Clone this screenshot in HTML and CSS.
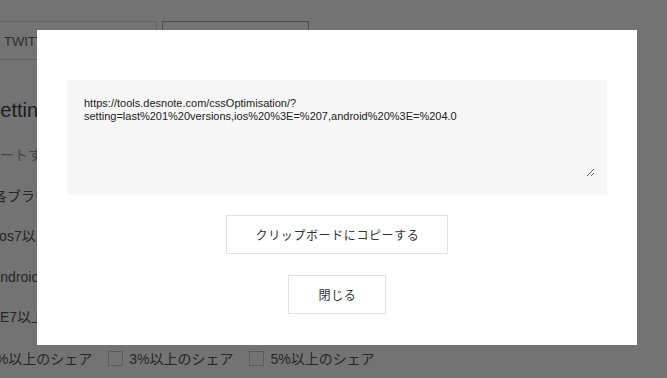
FILE: index.html
```html
<!DOCTYPE html>
<html lang="ja">
<head>
<meta charset="utf-8">
<title>CSS Optimisation</title>
<link rel="stylesheet" href="styles.css">
</head>
<body>
<div class="page">
  <div class="share-row">
    <div class="share-btn share-btn-twitter">TWITTERでシェア</div>
    <div class="share-btn share-btn-url">URLを発行する</div>
  </div>
  <h2 class="setting-title">Settings</h2>
  <p class="setting-desc">サポートするブラウザを選択してください</p>
  <p class="setting-sub">各ブラウザのバージョン</p>
  <label class="check-row"><span class="box"></span><span>ios7以上</span></label>
  <label class="check-row check-row-wide"><span class="box"></span><span>Android4.0以上</span></label>
  <label class="check-row"><span class="box"></span><span>IE7以上</span></label>
  <div class="share-checks">
    <label class="check-item"><span class="box"></span><span>1%以上のシェア</span></label>
    <label class="check-item"><span class="box"></span><span>3%以上のシェア</span></label>
    <label class="check-item"><span class="box"></span><span>5%以上のシェア</span></label>
  </div>
</div>

<div class="overlay">
  <div class="modal">
    <div class="url-box">
      <textarea class="url-text" spellcheck="false">https://tools.desnote.com/cssOptimisation/?setting=last%201%20versions,ios%20%3E=%207,android%20%3E=%204.0</textarea>
    </div>
    <button class="modal-btn modal-btn-copy">クリップボードにコピーする</button>
    <button class="modal-btn modal-btn-close">閉じる</button>
  </div>
</div>
</body>
</html>
```

FILE: styles.css
```css
html, body {
  margin: 0;
  padding: 0;
  background: #ffffff;
  overflow: hidden;
}

body {
  font-family: "Liberation Sans", "Noto Sans CJK JP", sans-serif;
  color: #555555;
  width: 667px;
  height: 378px;
}

.page {
  margin-left: -33px;
  padding-top: 21px;
  display: flex;
  flex-direction: column;
}

.share-row {
  display: flex;
  gap: 5px;
}

.share-btn {
  box-sizing: border-box;
  height: 39px;
  display: flex;
  align-items: center;
  font-size: 13px;
  color: #666666;
}

.share-btn-twitter {
  width: 190px;
  padding-left: 36px;
  border: 1px solid #dddddd;
}

.share-btn-url {
  width: 147px;
  justify-content: center;
  border: 1px solid #aaaaaa;
}

.setting-title {
  margin: 38px 0 0;
  padding-left: 20px;
  font-size: 20px;
  line-height: 24px;
  font-weight: normal;
  color: #444444;
}

.setting-desc,
.setting-sub,
.check-row {
  margin: 0;
  height: 40.6px;
  line-height: 40.6px;
  font-size: 14px;
}

.setting-desc {
  margin-top: 13px;
  padding-left: 5px;
  color: #999999;
}

.setting-sub {
  padding-left: 26px;
}

.check-row {
  display: flex;
  align-items: center;
  gap: 6px;
  padding-left: 8px;
}

.check-row-wide {
  padding-left: 3px;
}

.box {
  box-sizing: border-box;
  width: 15px;
  height: 15px;
  border: 1px solid #cccccc;
  background: #ffffff;
  flex: none;
}

.share-checks {
  display: flex;
  align-items: center;
  gap: 16px;
  height: 40.6px;
  font-size: 14px;
}

.check-item {
  display: flex;
  align-items: center;
  gap: 6px;
}

.overlay {
  position: fixed;
  inset: 0;
  background: rgba(0, 0, 0, 0.55);
  display: flex;
  align-items: flex-start;
  padding: 30px 0 0 37px;
}

.modal {
  box-sizing: border-box;
  width: 600px;
  background: #ffffff;
  padding: 50px 30px 31px;
  display: flex;
  flex-direction: column;
  align-items: center;
  gap: 21px;
}

.url-box {
  box-sizing: border-box;
  width: 540px;
  height: 114px;
  background: #f6f6f6;
  padding: 15px 12px 17px 15px;
  display: flex;
}

.url-text {
  flex: 1;
  box-sizing: border-box;
  margin: 0;
  border: none;
  outline: none;
  background: transparent;
  padding: 2px;
  font-family: "Liberation Sans", sans-serif;
  font-size: 11px;
  line-height: 13px;
  color: #222222;
  resize: vertical;
}

.modal-btn {
  box-sizing: border-box;
  height: 39px;
  margin: 0;
  background: #ffffff;
  border: 1px solid #e2e2e2;
  font-family: "Noto Sans CJK JP", sans-serif;
  font-size: 12px;
  letter-spacing: 0.6px;
  padding: 0 0 0 1px;
  color: #333333;
}

.modal-btn-copy {
  width: 222px;
}

.modal-btn-close {
  width: 98px;
}
```
